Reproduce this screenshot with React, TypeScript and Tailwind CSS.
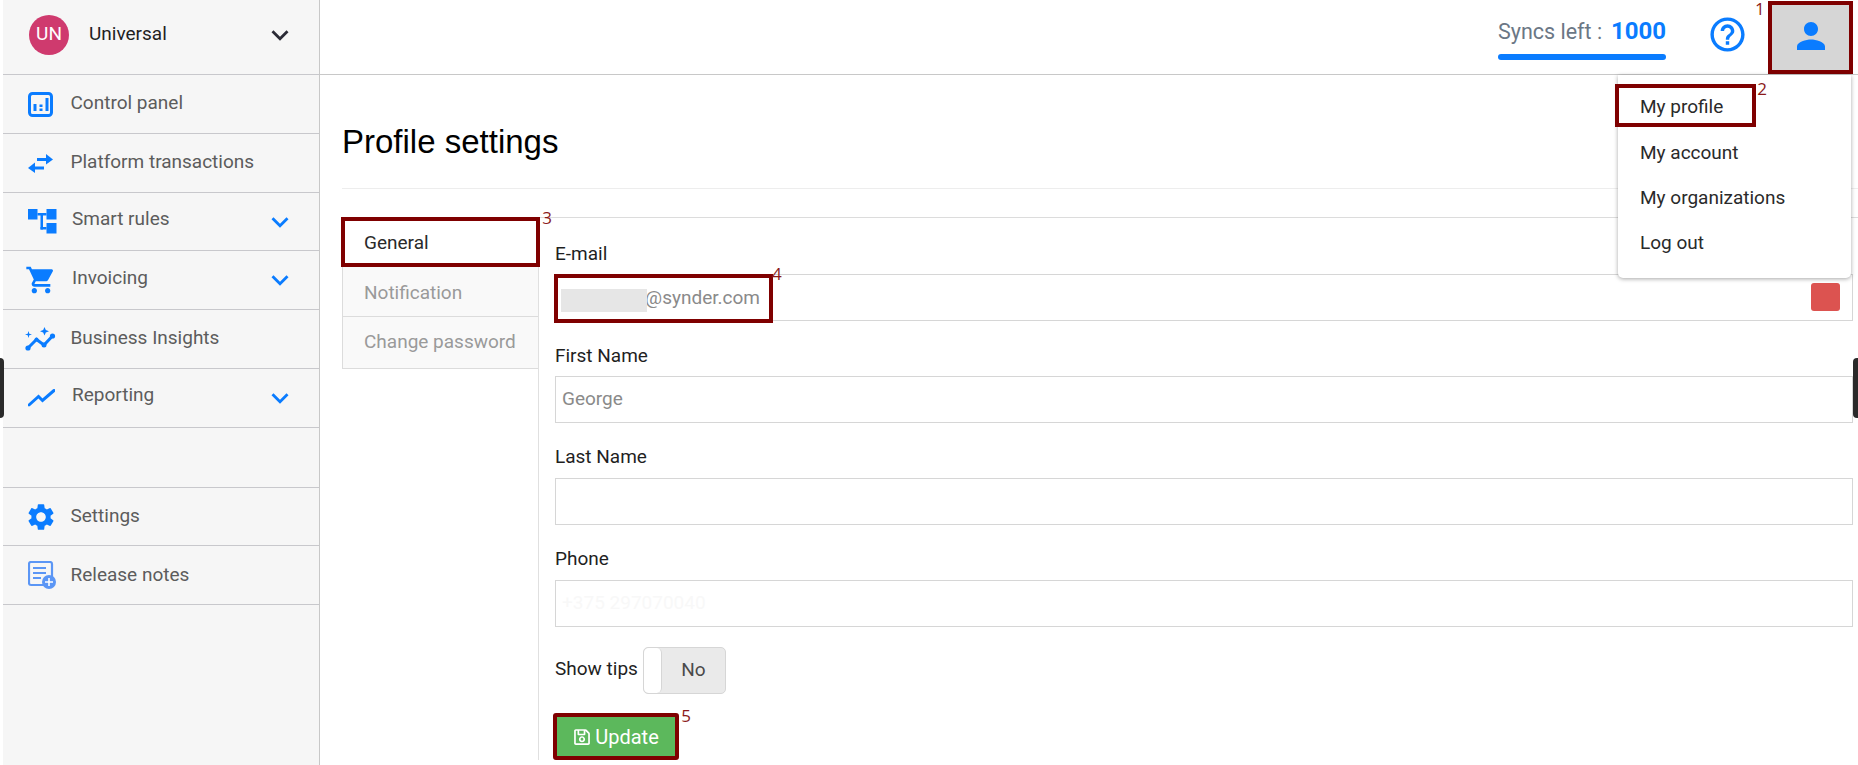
import React from "react";
import { MdKeyboardArrowDown, MdPerson, MdHelpOutline, MdSettings, MdShoppingCart } from "react-icons/md";
import { FaRegSave } from "react-icons/fa";

const font = { fontFamily: "Roboto, sans-serif" };
const blue = "#0a7cff";

function Num({ n, cls }: { n: string; cls: string }) {
  return <span className={"absolute text-[17px] leading-none text-[#8b1a1a] " + cls} style={{ fontFamily: "'Open Sans', sans-serif" }}>{n}</span>;
}

function Control() {
  return (
    <svg width="25" height="25" viewBox="0 0 25 25" fill={blue} className="shrink-0">
      <rect x="1.500" y="1.500" width="22" height="22" rx="3" fill="none" stroke={blue} strokeWidth="3" />
      <rect x="5.500" y="12" width="3" height="7" />
      <rect x="11.500" y="12.500" width="3" height="2.500" />
      <rect x="11.500" y="16.500" width="3" height="2.500" />
      <rect x="17.500" y="6" width="3" height="13" />
    </svg>
  );
}

function Arrows() {
  return (
    <svg width="25" height="19" viewBox="0 0 25 19" fill={blue} className="shrink-0">
      <rect x="9" y="4" width="10" height="3" />
      <path d="M18 0 L25 5.500 L18 10.500Z" />
      <rect x="5" y="12.500" width="11" height="3" />
      <path d="M7 8.500 L0 14 L7 19Z" />
    </svg>
  );
}

function Rules() {
  return (
    <svg width="29" height="25" viewBox="0 0 29 25" className="shrink-0" fill={blue}>
      <rect x="0" y="0" width="9.500" height="10.500" />
      <rect x="18.500" y="0" width="10" height="10.500" />
      <rect x="18.500" y="14" width="10" height="10.500" />
      <rect x="9.500" y="4" width="9" height="2.500" />
      <rect x="12.500" y="6" width="2.500" height="14.500" />
      <rect x="12.500" y="18" width="6" height="2.500" />
    </svg>
  );
}

function Insights() {
  return (
    <svg width="31" height="24" viewBox="0 0 31 24" fill="none" className="-ml-[3px] shrink-0">
      <path d="M3 21 L11.500 12.500 L19 18 L27.500 9" stroke={blue} strokeWidth="3" />
      <circle cx="3" cy="21" r="2.600" fill={blue} />
      <circle cx="11.500" cy="12.500" r="2" fill={blue} />
      <circle cx="19" cy="18" r="2.500" fill={blue} />
      <circle cx="27.500" cy="9" r="2.600" fill={blue} />
      <path d="M19.500 0 L20.800 3 L24 4.300 L20.800 5.600 L19.500 8.600 L18.200 5.600 L15 4.300 L18.200 3 Z" fill={blue} />
      <path d="M3.500 4 L4.300 6.700 L7 7.500 L4.300 8.300 L3.500 11 L2.700 8.300 L0 7.500 L2.700 6.700 Z" fill={blue} />
    </svg>
  );
}

function Chart() {
  return (
    <svg width="27" height="18" viewBox="0 0 27 18" fill="none" className="shrink-0">
      <path d="M1 16 L10.500 7.500 L14.500 11.500 L26 1.500" stroke={blue} strokeWidth="3" strokeLinecap="round" />
    </svg>
  );
}

function Notes() {
  return (
    <svg width="28" height="28" viewBox="0 0 28 28" fill="none" className="shrink-0">
      <rect x="1" y="1" width="23" height="23" rx="2" stroke="#5b96f5" strokeWidth="2.200" />
      <path d="M5 7h13M5 12h13M5 17h8" stroke="#5b96f5" strokeWidth="2" />
      <circle cx="21" cy="21" r="7" fill="#5b96f5" />
      <path d="M21 17v8M17 21h8" stroke="#fff" strokeWidth="1.600" />
    </svg>
  );
}

type Item = { icon: React.ReactNode; label: string; h: string; arrow?: boolean; sh?: boolean; ty?: string };

const items: Item[] = [
  { icon: <Control />, label: "Control panel", h: "h-[59px]", ty: "-translate-y-[1px]" },
  { icon: <Arrows />, label: "Platform transactions", h: "h-[59px]", ty: "-translate-y-[1px]" },
  { icon: <Rules />, label: "Smart rules", h: "h-[58px]", arrow: true, sh: true, ty: "-translate-y-[2px]" },
  { icon: <MdShoppingCart color={blue} className="-ml-[3px] -mr-[3px]" size={32} />, label: "Invoicing", h: "h-[59px]", arrow: true, sh: true, ty: "-translate-y-[2px]" },
  { icon: <Insights />, label: "Business Insights", h: "h-[59px]", ty: "-translate-y-[1px]" },
  { icon: <Chart />, label: "Reporting", h: "h-[59px]", arrow: true, sh: true, ty: "-translate-y-[3px]" },
];

function Row({ it }: { it: Item }) {
  return (
    <div className={"flex items-center border-b border-[#c8c8cc] pl-[25px] pr-[22px] " + it.h}>
      <div className={"flex shrink-0 " + (it.sh ? "w-[44px]" : "w-[42.500px]")}>{it.icon}</div>
      <span className={"flex-1 text-[19px] text-[#5c5c5c] " + (it.ty ?? "")}>{it.label}</span>
      {it.arrow && <MdKeyboardArrowDown size={34} color={blue} />}
    </div>
  );
}

function Field({ label, value, cls, labelCls, children }: { label: string; value?: string; cls?: string; labelCls?: string; children?: React.ReactNode }) {
  return (
    <div>
      <div className={"mb-[11px] h-[20px] text-[19px] leading-[20px] text-[#1f1f1f] " + (labelCls ?? "")}>{label}</div>
      <div className={"relative flex h-[47px] items-center border border-[#d6d6d6] pl-[6px] text-[19px] " + (cls ?? "")}>
        {value}
        {children}
      </div>
    </div>
  );
}

export default function App() {
  return (
    <div className="relative flex h-[765px] w-[1858px] overflow-hidden bg-white" style={font}>
      <div className="absolute left-0 top-[358px] z-10 h-[60px] w-[4px] rounded-r bg-[#2a2a2a]" />
      <div className="absolute right-0 top-[358px] z-10 h-[60px] w-[5px] rounded-l bg-[#2a2a2a]" />

      <aside className="ml-[3px] w-[317px] shrink-0 border-r border-[#c8c8c8] bg-[#f6f6f6]">
        <div className="flex h-[75px] items-center border-b border-[#c8c8cc] pb-[5px] pl-[26px] pr-[22px]">
          <div className="flex h-[40px] w-[40px] shrink-0 items-center justify-center rounded-full bg-[#cf3a6e] text-[19px] text-white">UN</div>
          <span className="ml-[20px] flex-1 text-[19px] text-[#1f1f1f]">Universal</span>
          <MdKeyboardArrowDown size={34} className="text-[#2b2b36]" />
        </div>
        {items.map((it) => <Row key={it.label} it={it} />)}
        <div className="h-[60px] border-b border-[#c8c8cc]" />
        <Row it={{ icon: <MdSettings color={blue} className="-ml-[3px]" size={32} />, label: "Settings", h: "h-[58px]" }} />
        <Row it={{ icon: <Notes />, label: "Release notes", h: "h-[59px]" }} />
      </aside>

      <main className="flex min-w-0 flex-1 flex-col">
        <header className="flex h-[75px] shrink-0 items-start justify-end border-b border-[#c8c8c8]">
          <div className="mr-[41px] mt-[18px] w-[168px]">
            <div className="flex items-baseline justify-between leading-[26px]">
              <span className="text-[21.500px] text-[#6b7785]">Syncs left :</span>
              <span className="text-[24px] font-bold text-[#0a7cff]">1000</span>
            </div>
            <div className="mt-[9px] h-[6px] rounded-full bg-[#0a7cff]" />
          </div>
          <MdHelpOutline size={41} color={blue} className="mr-[20px] mt-[14px]" />
          <div className="relative mr-[5px] mt-[1px] flex h-[73px] w-[85px] items-center justify-center border-[4px] border-[#7f0000] bg-[#d6d6d6]">
            <MdPerson size={42} color={blue} className="mb-[4px]" />
            <Num n="1" cls="-left-[17px] -top-[3px] !leading-[13px]" />
          </div>
        </header>

        <div className="relative flex-1 pl-[22px]">
          <h1 className="flex h-[114px] items-center border-b border-[#ededed] pt-[20px] text-[33px] font-normal text-black" style={{ fontFamily: "'Liberation Sans', sans-serif" }}>Profile settings</h1>

          <div className="mt-[28px] flex">
            <div className="w-[197px] shrink-0 border-r border-[#e0e0e0]">
              <div className="relative -mx-[1px] flex h-[50px] w-[199px] items-center border-[4px] border-[#7f0000] pl-[19px] pt-[2px] text-[19px] text-[#2a2a2a]">
                General
                <Num n="3" cls="-right-[16px] -top-[12px]" />
              </div>
              <div className="flex h-[50px] items-center border-b border-l border-[#dcdcdc] bg-[#f9f9f9] pl-[21px] pt-[3px] text-[19px] text-[#9a9a9a]">Notification</div>
              <div className="flex h-[52px] items-center border-b border-l border-[#dcdcdc] bg-[#f9f9f9] pl-[21px] text-[19px] text-[#9a9a9a]">Change password</div>
            </div>
            <div className="flex min-w-0 flex-1 flex-col gap-[24px] border-t border-[#dcdcdc] pl-[16px] pr-[5px] pt-[25px]">
              <Field label="E-mail" cls="text-[#8a8a8a]" labelCls="translate-y-[1px]">
                <div className="absolute -left-[2px] -top-[1px] flex h-[49px] w-[219px] items-center justify-end border-[4px] border-[#7f0000] pr-[9px]">
                  <span className="absolute left-[3px] top-[11px] h-[23px] w-[86px] bg-[#e6e6e6]" />
                  @synder.com
                </div>
                <Num n="4" cls="left-[216px] -top-[10px]" />
                <div className="absolute right-[12px] top-[8px] h-[28px] w-[29px] rounded-[3px] bg-[#dc5350]" />
              </Field>
              <Field label="First Name" value="George" cls="text-[#8a8a8a]" labelCls="translate-y-[1px]" />
              <Field label="Last Name" />
              <Field label="Phone" value="+375 297070040" cls="text-[#f8f8f8]" />
              <div className="-mt-[4px] flex items-center gap-[5px]">
                <span className="-translate-y-[1px] text-[19px] text-[#1f1f1f]">Show tips</span>
                <div className="flex h-[47px] w-[83px] overflow-hidden rounded-[5px] border border-[#d6d6d6] bg-[#eaeaea]">
                  <div className="w-[18px] rounded-[5px] border-r border-[#d6d6d6] bg-white" />
                  <div className="flex flex-1 items-center justify-center text-[19px] text-[#4a4a4a]">No</div>
                </div>
              </div>
              <div className="relative -ml-[2px] -mt-[5px] flex h-[47px] w-[126px] items-center justify-center gap-[4px] rounded-[3px] border-[4px] border-[#7f0000] bg-[#5cb85c] text-[20px] text-white">
                <FaRegSave size={18} />
                Update
                <Num n="5" cls="-right-[16px] -top-[10px]" />
              </div>
            </div>
          </div>

          <div className="absolute right-[7px] top-0 z-10 h-[203px] w-[233px] rounded-b-[5px] bg-white pt-[9px] shadow-[0_1px_4px_rgba(0,0,0,0.35)]">
            <div className="relative -ml-[3px] flex h-[43px] w-[141px] items-center border-[4px] border-[#7f0000] pl-[21px] pt-[3px] text-[19px] text-[#2a2a2a]">
              My profile
              <Num n="2" cls="-right-[15px] -top-[8px]" />
            </div>
            <div className="flex h-[50px] items-center pl-[22px] pt-[2px] text-[19px] text-[#2a2a2a]">My account</div>
            <div className="-mt-[2px] flex h-[45px] items-center pl-[22px] pt-[2px] text-[19px] text-[#2a2a2a]">My organizations</div>
            <div className="flex h-[45px] items-center pl-[22px] pt-[2px] text-[19px] text-[#2a2a2a]">Log out</div>
          </div>
        </div>
      </main>
    </div>
  );
}
